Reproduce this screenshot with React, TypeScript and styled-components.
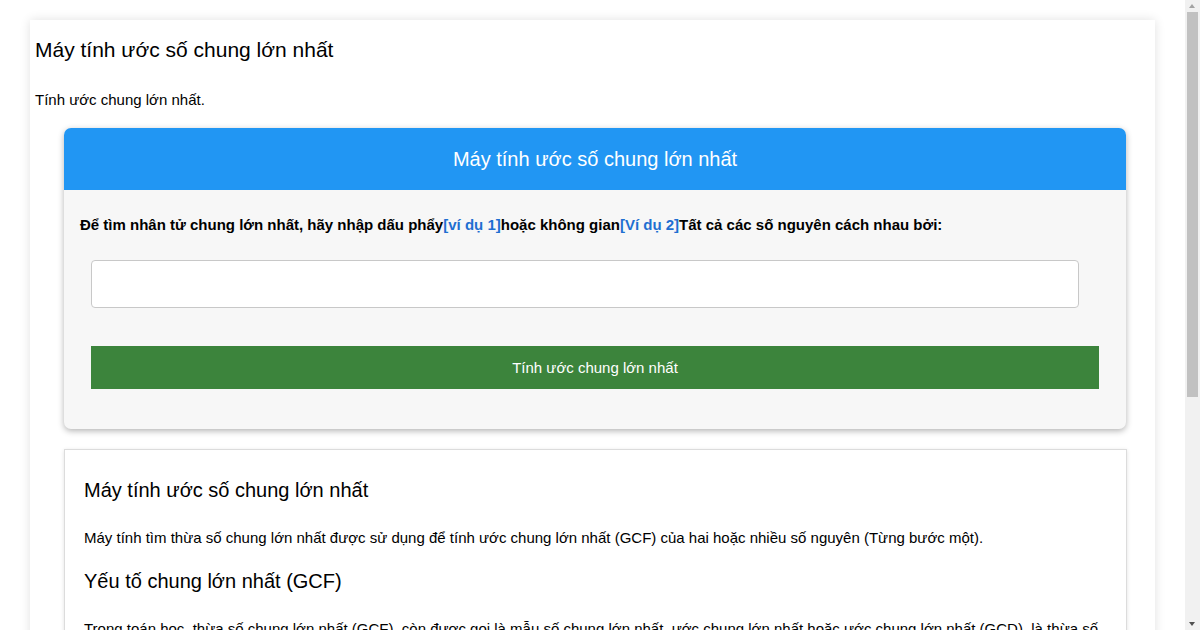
import React from "react";
import styled, { createGlobalStyle } from "styled-components";

const GlobalStyle = createGlobalStyle`
  html, body {
    margin: 0;
    padding: 0;
    background: #ffffff;
    font-family: "Liberation Sans", Arial, sans-serif;
    color: #000;
  }
`;

const Page = styled.div`
  width: 1185px;
  padding: 20px 0 30px;
`;

const Container = styled.div`
  width: 1115px;
  margin: 0 auto;
  padding: 18px 5px 20px;
  background: #fff;
  box-shadow: 0 0 10px rgba(0, 0, 0, 0.12);
`;

const PageTitle = styled.h1`
  margin: 0;
  font-size: 21px;
  font-weight: normal;
  line-height: 24px;
`;

const Lead = styled.p`
  margin: 28px 0 0;
  font-size: 15px;
  line-height: 20px;
`;

const CalcCard = styled.div`
  width: 1062px;
  margin: 18px 0 0 29px;
  background: #f7f7f7;
  border-radius: 7px;
  box-shadow: 0 2px 6px rgba(0, 0, 0, 0.3);
  overflow: hidden;
`;

const CalcHeader = styled.div`
  height: 62px;
  background: #2196f3;
  color: #fff;
  font-size: 20px;
  display: flex;
  align-items: center;
  justify-content: center;
`;

const CalcBody = styled.div`
  padding: 25px 16px 40px;
`;

const Label = styled.div`
  font-size: 15px;
  font-weight: bold;
  line-height: 20px;
`;

const Example = styled.span`
  color: #1f6fd1;
`;

const Input = styled.input`
  display: block;
  box-sizing: border-box;
  width: 988px;
  height: 48px;
  margin: 25px 0 0 11px;
  border: 1px solid #c8c8c8;
  border-radius: 4px;
  background: #fff;
  font-size: 16px;
  padding: 0 12px;
  outline: none;
`;

const Button = styled.button`
  display: block;
  width: 1008px;
  height: 43px;
  margin: 38px 0 0 11px;
  border: none;
  background: #3c843c;
  color: #fff;
  font-family: "Liberation Sans", Arial, sans-serif;
  font-size: 15px;
  cursor: pointer;
`;

const InfoCard = styled.div`
  width: 1023px;
  margin: 20px 0 0 29px;
  padding: 23px 19px 20px;
  background: #fff;
  border: 1px solid #dcdcdc;
  box-shadow: 0 1px 4px rgba(0, 0, 0, 0.12);
`;

const SectionTitle = styled.h2`
  margin: 0;
  font-size: 20px;
  font-weight: normal;
  line-height: 34px;
`;

const Text = styled.p`
  margin: 21px 0 16px;
  font-size: 15px;
  line-height: 20px;
`;

const ScrollTrack = styled.div`
  position: fixed;
  top: 0;
  right: 0;
  width: 15px;
  height: 100vh;
  background: #f1f1f1;
`;

const ScrollThumb = styled.div`
  position: absolute;
  top: 12px;
  left: 2px;
  width: 11px;
  height: 385px;
  background: #c1c1c1;
`;

const Arrow = styled.div<{ $down?: boolean }>`
  position: absolute;
  left: 4px;
  ${(p) => (p.$down ? "bottom: 4px;" : "top: 4px;")}
  width: 0;
  height: 0;
  border-left: 3.5px solid transparent;
  border-right: 3.5px solid transparent;
  ${(p) =>
    p.$down
      ? "border-top: 4px solid #505050;"
      : "border-bottom: 4px solid #a3a3a3;"}
`;

export default function App() {
  return (
    <>
      <GlobalStyle />
      <Page>
        <Container>
          <PageTitle>Máy tính ước số chung lớn nhất</PageTitle>
          <Lead>Tính ước chung lớn nhất.</Lead>
          <CalcCard>
            <CalcHeader>Máy tính ước số chung lớn nhất</CalcHeader>
            <CalcBody>
              <Label>
                Để tìm nhân tử chung lớn nhất, hãy nhập dấu phẩy
                <Example>[ví dụ 1]</Example>hoặc không gian
                <Example>[Ví dụ 2]</Example>Tất cả các số nguyên cách nhau bởi:
              </Label>
              <Input type="text" />
              <Button>Tính ước chung lớn nhất</Button>
            </CalcBody>
          </CalcCard>
          <InfoCard>
            <SectionTitle>Máy tính ước số chung lớn nhất</SectionTitle>
            <Text>
              Máy tính tìm thừa số chung lớn nhất được sử dụng để tính ước chung
              lớn nhất (GCF) của hai hoặc nhiều số nguyên (Từng bước một).
            </Text>
            <SectionTitle>Yếu tố chung lớn nhất (GCF)</SectionTitle>
            <Text>
              Trong toán học, thừa số chung lớn nhất (GCF), còn được gọi là mẫu
              số chung lớn nhất, ước chung lớn nhất hoặc ước chung lớn nhất
              (GCD), là thừa số dương lớn nhất chia hết cho mỗi số nguyên đã cho
              mà không để lại số dư. Ví dụ, ước chung lớn nhất của 8 và 12 là 4.
            </Text>
            <SectionTitle>Cách tìm ước chung lớn nhất</SectionTitle>
            <Text>
              Liệt kê tất cả các ước của từng số, sau đó chọn ước lớn nhất xuất
              hiện trong tất cả các danh sách. Đó chính là ước chung lớn nhất của
              các số đã cho.
            </Text>
          </InfoCard>
        </Container>
      </Page>
      <ScrollTrack>
        <Arrow />
        <ScrollThumb />
        <Arrow $down />
      </ScrollTrack>
    </>
  );
}
